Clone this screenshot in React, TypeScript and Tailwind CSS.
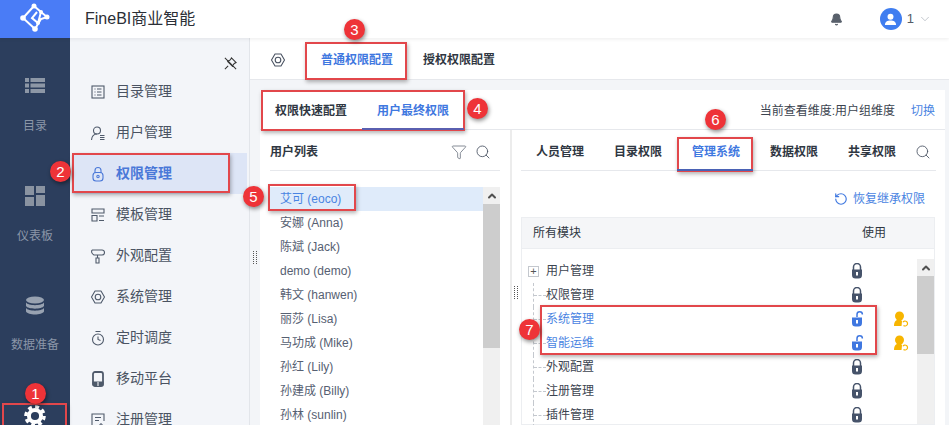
import { Bell, ChevronDown, ChevronUp, Filter, RotateCcw, Search } from 'lucide-react';
import type { ReactNode } from 'react';

const FONT = "font-['Liberation_Sans','Noto_Sans_CJK_SC',sans-serif]";

const menuIcon = 'w-4 h-4 stroke-[#4f5a6b]';

function Svg({ children, className }: { children: ReactNode; className?: string }) {
  return (
    <svg viewBox="0 0 16 16" fill="none" strokeWidth="1.100" className={className ?? menuIcon}>
      {children}
    </svg>
  );
}

function Hexagon({ className }: { className?: string }) {
  return (
    <Svg className={className}>
      <path d="M5 2h6l3.500 6-3.500 6H5L1.500 8z" strokeLinejoin="round" />
      <circle cx="8" cy="8" r="2.800" />
    </Svg>
  );
}

const menu = [
  { label: '目录管理', icon: <Svg><rect x="2" y="2" width="12" height="12" /><path d="M4.500 5h1M4.500 8h1M4.500 11h1M7 5h4.500M7 8h4.500M7 11h4.500" /></Svg> },
  { label: '用户管理', icon: <Svg><circle cx="7" cy="5.500" r="3.500" /><path d="M1.500 15c.3-3.500 2.500-6 5.500-6M10 10.500h4.500M10 12.500h4.500M10 14.500h4.500" /></Svg> },
  { label: '权限管理', active: true, icon: <Svg className="w-4 h-4 stroke-[#4a78d8]"><path d="M5 7V4.500a3 3 0 0 1 6 0V7" /><rect x="3" y="6.500" width="10" height="8.500" rx="3" /><circle cx="8" cy="10.500" r="1.200" /></Svg> },
  { label: '模板管理', icon: <Svg><path d="M2 2h12v4H2zM2 8.500h5V14H2zM9 9h5M9 13.500h5" /></Svg> },
  { label: '外观配置', icon: <Svg><path d="M2 2h10a2 2 0 0 1 0 5H7.500v2.500M6 10h3v5H6zM2 2c-1 2 0 4 2 5h3" /></Svg> },
  { label: '系统管理', icon: <Hexagon /> },
  { label: '定时调度', icon: <Svg><circle cx="8" cy="9.500" r="5.500" /><path d="M5.500 1.500h5M8 6.500v3l2.500 1" /></Svg> },
  { label: '移动平台', icon: <Svg><rect x="3" y="1" width="10" height="14" rx="2" strokeWidth="1.800" /><path d="M3 11h10v3H3z" fill="#4f5a6b" /><path d="M8 11v4" stroke="#f3f5f8" /></Svg> },
  { label: '注册管理', icon: <Svg><path d="M14 9V2H2v12h7M5 5.500h6M5 8.500h4M11 11v4M9 13h4" /></Svg> },
];

const users = ['安娜 (Anna)', '陈斌 (Jack)', 'demo (demo)', '韩文 (hanwen)', '丽莎 (Lisa)', '马功成 (Mike)', '孙红 (Lily)', '孙建成 (Billy)', '孙林 (sunlin)'];

const modules = [
  { name: '用户管理', first: true },
  { name: '权限管理' },
  { name: '系统管理', open: true },
  { name: '智能运维', open: true },
  { name: '外观配置' },
  { name: '注册管理' },
  { name: '插件管理' },
];

function LockIcon({ open }: { open?: boolean }) {
  const color = open ? '#3f77e0' : '#46536a';
  return (
    <svg viewBox="0 0 14 16" className="w-[14px] h-4">
      <path d={open ? 'M7 6V3.500a2.700 2.700 0 0 1 5.400 0' : 'M3.500 7V4a3.500 3.500 0 0 1 7 0v3'} fill="none" stroke={color} strokeWidth="1.500" />
      <path d="M2 6.500h10v5.500a3.500 3.500 0 0 1-3.500 3.500h-3A3.500 3.500 0 0 1 2 12z" fill={color} />
      <rect x="6" y="9" width="2" height="3.500" fill="#fff" />
    </svg>
  );
}

function Handle({ className }: { className: string }) {
  return (
    <svg viewBox="0 0 5 13" className={`w-[5px] h-[13px] ${className}`}>
      <path d="M0.500 0v13M3.500 0v13" stroke="#555" strokeWidth="1" strokeDasharray="1 1" />
    </svg>
  );
}

function Scrollbar({ thumb }: { thumb: string }) {
  return (
    <div className="w-[17px] shrink-0 bg-[#f0f0f0] flex flex-col">
      <div className="h-[17px] flex items-center justify-center">
        <ChevronUp className="w-3 h-3 stroke-[#505050] stroke-[4]" />
      </div>
      <div className={`bg-[#cdcdcd] ${thumb}`} />
    </div>
  );
}

function Badge({ n, className }: { n: number; className: string }) {
  return (
    <div className={`absolute z-20 w-[21px] h-[21px] rounded-full bg-[#ee3338] text-white text-[15px] leading-[21px] text-center shadow-[1px_2px_4px_rgba(0,0,0,0.45)] ${className}`}>
      {n}
    </div>
  );
}

function Box({ className }: { className: string }) {
  return <div className={`absolute z-20 border-2 border-[#e2474b] shadow-[1px_2px_4px_rgba(0,0,0,0.3)] ${className}`} />;
}

export default function App() {
  return (
    <div className={`relative w-[949px] h-[425px] overflow-hidden bg-white ${FONT}`}>
      {/* top bar */}
      <div className="flex h-[38px] relative z-10 shadow-[0_1px_4px_rgba(0,0,0,0.08)] bg-white">
        <div className="w-[70px] bg-[#4a7cf6]">
          <svg viewBox="0 0 70 38" className="w-[70px] h-[38px]">
            <path d="M34 6 23 18l12 11M34 6l7 6 6 5-6 2-3 5-3 5M41 12l-3 11-6-5 5-6" fill="none" stroke="#fff" strokeWidth="2" />
            <circle cx="34" cy="6" r="2.500" fill="#fff" />
            <circle cx="23" cy="18" r="2.800" fill="#fff" />
            <circle cx="35" cy="29" r="2.800" fill="#fff" />
            <circle cx="47" cy="17" r="2.500" fill="#fff" />
            <circle cx="41" cy="12" r="2" fill="#fff" />
            <circle cx="38" cy="23" r="2" fill="#fff" />
          </svg>
        </div>
        <div className="pl-[15px] text-[16px] leading-[38px] text-[#2b2f36]">FineBI商业智能</div>
        <div className="ml-auto flex items-center pr-[17px]">
          <Bell className="w-[13px] h-[13px] fill-[#59606b] stroke-[#59606b] mr-[37px]" />
          <div className="w-[22px] h-[22px] rounded-full bg-[#3f7df0] flex items-center justify-center mr-[5px]">
            <svg viewBox="0 0 14 14" className="w-[13px] h-[13px]">
              <circle cx="7" cy="4" r="3.200" fill="#fff" />
              <path d="M1 13c0-3.500 2.500-5 6-5s6 1.500 6 5z" fill="#fff" />
            </svg>
          </div>
          <span className="text-[13px] text-[#555b66] mr-[4px]">1</span>
          <ChevronDown className="w-[14px] h-[14px] stroke-[#9aa0aa] stroke-1" />
        </div>
      </div>

      <div className="flex h-[387px]">
        {/* dark rail */}
        <div className="w-[70px] shrink-0 bg-[#2c3e5d] flex flex-col items-center text-[12px] text-[#8b96a8]">
          <div className="h-[110px] shrink-0 pt-[37px] flex flex-col items-center">
            <svg viewBox="0 0 20 20" className="w-[20px] h-[20px] fill-[#8d97a6]">
              <path d="M0 3h4v4H0zM5.500 3H20v4H5.500zM0 8.500h4v4H0zM5.500 8.500H20v4H5.500zM0 14h4v4H0zM5.500 14H20v4H5.500z" />
            </svg>
            <div className="mt-[22px] leading-[18px]">目录</div>
          </div>
          <div className="h-[110px] shrink-0 pt-[38px] flex flex-col items-center">
            <svg viewBox="0 0 20 20" className="w-[20px] h-[20px] fill-[#8a93a1]">
              <path d="M0 0h9v9H0zM11 0h9v7h-9zM0 11h9v9H0zM11 9h9v11h-9z" />
            </svg>
            <div className="mt-[21px] leading-[18px]">仪表板</div>
          </div>
          <div className="h-[109px] shrink-0 pt-[38px] flex flex-col items-center">
            <svg viewBox="0 0 20 20" className="w-[20px] h-[20px]">
              <ellipse cx="10" cy="4" rx="9" ry="3.500" fill="#98a2b1" />
              <path d="M1 6.500c2 3.500 16 3.500 18 0V10c-2 3.500-16 3.500-18 0zM1 12c2 3.500 16 3.500 18 0v3.500c-2 4-16 4-18 0z" fill="#98a2b1" />
            </svg>
            <div className="mt-[20px] leading-[18px]">数据准备</div>
          </div>
          <div className="pt-[38px]">
            <svg viewBox="0 0 20 20" className="w-[22px] h-[22px]" fill="none" stroke="#fff">
              <circle cx="10" cy="10" r="5.500" strokeWidth="3.600" />
              <circle cx="10" cy="10" r="8.300" strokeWidth="3" strokeDasharray="3.500 3" />
            </svg>
          </div>
        </div>

        {/* admin menu */}
        <div className="w-[180px] shrink-0 bg-[#f3f5f9] border-r border-[#e2e5ea]">
          <div className="h-[33px] flex items-end justify-end pr-[11px]">
            <svg viewBox="0 0 16 16" className="w-[15px] h-[15px]" fill="none" stroke="#333" strokeWidth="1.100">
              <path d="m9 2 5 5-2 1-2 3-5-5 3-2zM5.500 10.500 2 14M2 2l12 12" />
            </svg>
          </div>
          {menu.map((m) => (
            <div key={m.label} className={`h-[41px] mx-[2px] pl-[18px] flex items-center gap-[10px] text-[14px] ${m.active ? 'bg-[#dde5f6] text-[#4a78d8] font-bold' : 'text-[#4a5362]'}`}>
              {m.icon}
              {m.label}
            </div>
          ))}
        </div>

        {/* main */}
        <div className="flex-1 min-w-0 bg-[#f3f5f8] flex flex-col">
          <div className="h-[42px] shrink-0 bg-white border-b border-[#e6e8ec] flex items-center pt-[2px] text-[12px] font-bold text-[#2f3742]">
            <Hexagon className="w-4 h-4 ml-[20px] stroke-[#4a5362]" />
            <div className="ml-[35px] text-[#3f78e0]">普通权限配置</div>
            <div className="ml-[30px]">授权权限配置</div>
          </div>

          <div className="flex flex-1 min-h-0">
            <div className="w-[10px] shrink-0 flex justify-center">
              <Handle className="mt-[171px]" />
            </div>
            <div className="w-[685px] shrink-0 mt-[10px] bg-white flex flex-col">
              <div className="relative h-[40px] shrink-0 border-b border-[#e6e8ec] flex items-center pt-[2px] text-[12px] text-[#2f3742]">
                <div className="ml-[15px] font-bold">权限快速配置</div>
                <div className="ml-[30px] font-bold text-[#3f78e0]">用户最终权限</div>
                <div className="absolute z-30 left-[102px] w-[102px] -bottom-[1px] h-[2px] bg-[#5a5fb0]" />
                <div className="ml-auto text-[#3c4450]">当前查看维度:用户组维度</div>
                <div className="ml-[16px] mr-[10px] text-[#4a84e2]">切换</div>
              </div>

              <div className="flex flex-1 min-h-0">
                {/* user list */}
                <div className="w-[250px] shrink-0 flex flex-col pl-[10px] pr-[10px]">
                  <div className="h-[41px] shrink-0 border-b border-[#e6e8ec] flex items-center pt-[3px] text-[12px] font-bold text-[#2f3742]">
                    用户列表
                    <Filter className="w-4 h-4 ml-auto stroke-[#4a5362] stroke-1" />
                    <Search className="w-4 h-4 ml-[8px] mr-[9px] stroke-[#4a5362] stroke-[1.300]" />
                  </div>
                  <div className="flex flex-1 mt-[16px] min-h-0">
                    <div className="flex-1 min-w-0 text-[12px] text-[#566072]">
                      <div className="h-[24px] bg-[#dfebfa] pl-[10px] leading-[24px] text-[#4a84e2]">艾可 (eoco)</div>
                      {users.map((u) => (
                        <div key={u} className="h-[24px] pl-[10px] leading-[24px]">{u}</div>
                      ))}
                    </div>
                    <Scrollbar thumb="h-[144px]" />
                  </div>
                </div>

                {/* permissions */}
                <div className="flex-1 min-w-0 border-l-2 border-[#ececec] flex">
                  <div className="w-[9px] shrink-0 flex justify-center">
                    <Handle className="mt-[156px]" />
                  </div>
                  <div className="w-[415px] shrink-0 flex flex-col">
                    <div className="relative h-[41px] shrink-0 border-b border-[#e6e8ec] flex items-center pt-[3px] text-[12px] font-bold text-[#2f3742]">
                      <div className="ml-[15px]">人员管理</div>
                      <div className="ml-[30px]">目录权限</div>
                      <div className="ml-[30px] text-[#3f78e0]">管理系统</div>
                      <div className="absolute z-30 left-[156px] w-[76px] -bottom-[1px] h-[2px] bg-[#4a62b5]" />
                      <div className="ml-[30px]">数据权限</div>
                      <div className="ml-[30px]">共享权限</div>
                      <Search className="w-4 h-4 ml-auto mr-[5px] stroke-[#4a5362] stroke-[1.300]" />
                    </div>
                    <div className="h-[46px] shrink-0 flex items-center justify-end pt-[10px] pr-[11px] text-[12px] text-[#4a84e2]">
                      <RotateCcw className="w-[14px] h-[14px] mr-[5px] stroke-[#3f78e0]" />
                      恢复继承权限
                    </div>
                    <div className="flex-1 min-h-0 border border-[#eceef1] flex flex-col mr-[1px]">
                      <div className="h-[31px] shrink-0 bg-[#f5f6f8] border-b border-[#eceef1] flex items-center text-[12px] text-[#2f3742]">
                        <div className="ml-[11px]">所有模块</div>
                        <div className="ml-auto mr-[48px]">使用</div>
                      </div>
                      <div className="flex flex-1 min-h-0 pt-[10px]">
                        <div className="flex-1 min-w-0 text-[12px] text-[#3c4450]">
                          {modules.map((m) => (
                            <div key={m.name} className="h-[24px] flex items-center">
                              <div className="w-[24px] shrink-0 h-full flex items-center">
                                {m.first ? (
                                  <div className="ml-[6px] w-[11px] h-[11px] border border-[#c4c8ce] flex items-center justify-center text-[#555] text-[11px] leading-none">+</div>
                                ) : (
                                  <div className="ml-[11px] w-[13px] h-full border-l border-dashed border-[#c4c8ce] flex items-center">
                                    <div className="w-full border-t border-dashed border-[#c4c8ce]" />
                                  </div>
                                )}
                              </div>
                              <div className={m.open ? 'text-[#4a84e2]' : ''}>{m.name}</div>
                              <div className="ml-auto w-[14px] mr-[29px] flex">
                                <LockIcon open={m.open} />
                              </div>
                              <div className="w-[16px] mr-[8px] flex justify-center">
                                {m.open && (
                                  <svg viewBox="0 0 16 16" className="w-4 h-4">
                                    <circle cx="6.500" cy="5" r="4.500" fill="#f7b500" />
                                    <path d="M1 15c0-4 1.500-6.500 5.500-6.500 1.500 0 2.500 1 2.500 2L8.500 15z" fill="#f7b500" />
                                    <path d="M10.500 14.500a2.500 2.500 0 1 0-.6-3.300" fill="none" stroke="#f7b500" strokeWidth="1.200" />
                                  </svg>
                                )}
                              </div>
                            </div>
                          ))}
                        </div>
                        <Scrollbar thumb="h-[78px]" />
                      </div>
                    </div>
                  </div>
                </div>
              </div>
            </div>
          </div>
        </div>
      </div>

      {/* annotations */}
      <Box className="left-[2px] top-[403px] w-[65px] h-[30px]" />
      <Box className="left-[72px] top-[153px] w-[158px] h-[40px]" />
      <Box className="left-[305px] top-[42px] w-[102px] h-[38px]" />
      <Box className="left-[261px] top-[90px] w-[204px] h-[41px]" />
      <Box className="left-[268px] top-[184px] w-[88px] h-[27px]" />
      <Box className="left-[677px] top-[137px] w-[76px] h-[35px]" />
      <Box className="left-[540px] top-[305px] w-[337px] h-[50px]" />
      <Badge n={1} className="left-[25px] top-[383px]" />
      <Badge n={2} className="left-[50px] top-[161px]" />
      <Badge n={3} className="left-[344px] top-[19px]" />
      <Badge n={4} className="left-[467px] top-[98px]" />
      <Badge n={5} className="left-[243px] top-[186px]" />
      <Badge n={6} className="left-[705px] top-[109px]" />
      <Badge n={7} className="left-[519px] top-[319px]" />
    </div>
  );
}
